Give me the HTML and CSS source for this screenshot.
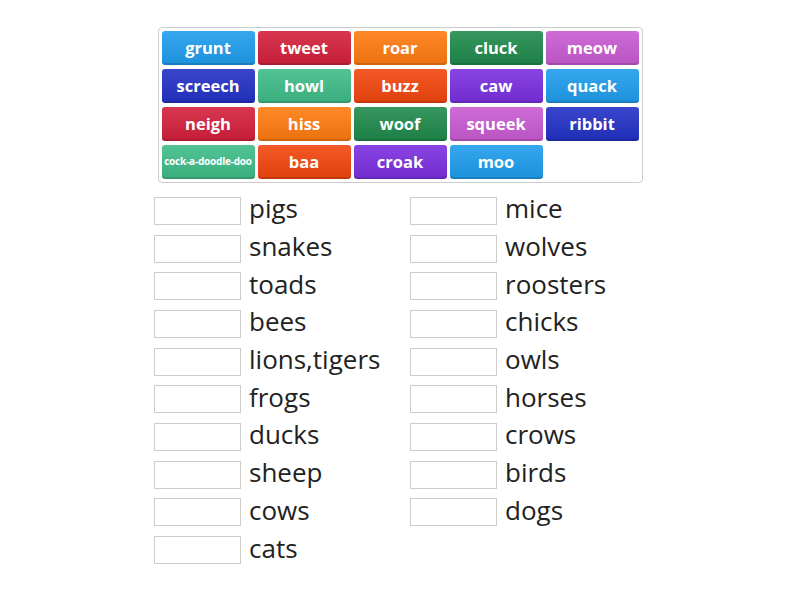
FILE: index.html
```html
<!DOCTYPE html>
<html lang="en">
<head>
    <meta charset="UTF-8">
    <meta name="viewport" content="width=device-width, initial-scale=1.0">
    <title>Animal Sounds Match</title>
    <link rel="stylesheet" href="styles.css">
</head>
<body>
    <div id="wordBank">
        <div class="tile blue">grunt</div>
        <div class="tile crimson">tweet</div>
        <div class="tile orange">roar</div>
        <div class="tile green">cluck</div>
        <div class="tile pink">meow</div>
        <div class="tile navy">screech</div>
        <div class="tile teal">howl</div>
        <div class="tile redorange">buzz</div>
        <div class="tile purple">caw</div>
        <div class="tile blue">quack</div>
        <div class="tile crimson">neigh</div>
        <div class="tile orange">hiss</div>
        <div class="tile green">woof</div>
        <div class="tile pink">squeek</div>
        <div class="tile navy">ribbit</div>
        <div class="tile teal small">cock-a-doodle-doo</div>
        <div class="tile redorange">baa</div>
        <div class="tile purple">croak</div>
        <div class="tile blue">moo</div>
    </div>

    <div id="answers">
        <div class="column">
            <div class="row"><span class="slot"></span><span class="animal">pigs</span></div>
            <div class="row"><span class="slot"></span><span class="animal">snakes</span></div>
            <div class="row"><span class="slot"></span><span class="animal">toads</span></div>
            <div class="row"><span class="slot"></span><span class="animal">bees</span></div>
            <div class="row"><span class="slot"></span><span class="animal">lions,tigers</span></div>
            <div class="row"><span class="slot"></span><span class="animal">frogs</span></div>
            <div class="row"><span class="slot"></span><span class="animal">ducks</span></div>
            <div class="row"><span class="slot"></span><span class="animal">sheep</span></div>
            <div class="row"><span class="slot"></span><span class="animal">cows</span></div>
            <div class="row"><span class="slot"></span><span class="animal">cats</span></div>
        </div>
        <div class="column">
            <div class="row"><span class="slot"></span><span class="animal">mice</span></div>
            <div class="row"><span class="slot"></span><span class="animal">wolves</span></div>
            <div class="row"><span class="slot"></span><span class="animal">roosters</span></div>
            <div class="row"><span class="slot"></span><span class="animal">chicks</span></div>
            <div class="row"><span class="slot"></span><span class="animal">owls</span></div>
            <div class="row"><span class="slot"></span><span class="animal">horses</span></div>
            <div class="row"><span class="slot"></span><span class="animal">crows</span></div>
            <div class="row"><span class="slot"></span><span class="animal">birds</span></div>
            <div class="row"><span class="slot"></span><span class="animal">dogs</span></div>
        </div>
    </div>
</body>
</html>
```

FILE: styles.css
```css
body {
    font-family: "Open Sans", "Liberation Sans", sans-serif;
    margin: 0;
    padding: 0;
    background-color: #fff;
    color: #222;
}
#wordBank {
    width: 477px;
    margin: 27px auto 0;
    padding: 3px;
    border: 1px solid #ccc;
    border-radius: 4px;
    display: grid;
    grid-template-columns: repeat(5, 93px);
    grid-auto-rows: 34px;
    column-gap: 3px;
    row-gap: 4px;
}
.tile {
    display: flex;
    align-items: center;
    justify-content: center;
    color: #fff;
    font-weight: bold;
    font-size: 16.5px;
    padding-bottom: 2px;
    border-radius: 3px;
    box-shadow: inset 0 -2px 0 rgba(0, 0, 0, 0.12);
    background-image: linear-gradient(rgba(255, 255, 255, 0.1), rgba(0, 0, 0, 0.08));
    white-space: nowrap;
}
.tile.small {
    font-size: 10px;
    letter-spacing: -0.2px;
}
.blue { background-color: #1f9ded; }
.crimson { background-color: #d4203c; }
.orange { background-color: #ff7b10; }
.green { background-color: #1f8a4c; }
.pink { background-color: #c95bd3; }
.navy { background-color: #2331c6; }
.teal { background-color: #3fbc88; }
.redorange { background-color: #f2460e; }
.purple { background-color: #7b2fe0; }
#answers {
    display: grid;
    grid-template-columns: 256px 256px;
    margin: 9px 0 0 154px;
}
.row {
    display: flex;
    align-items: center;
    height: 37.7px;
}
.slot {
    width: 85px;
    height: 26px;
    border: 1px solid #ccc;
    margin-right: 8px;
}
.animal {
    font-size: 26px;
    margin-top: -5px;
}
```
